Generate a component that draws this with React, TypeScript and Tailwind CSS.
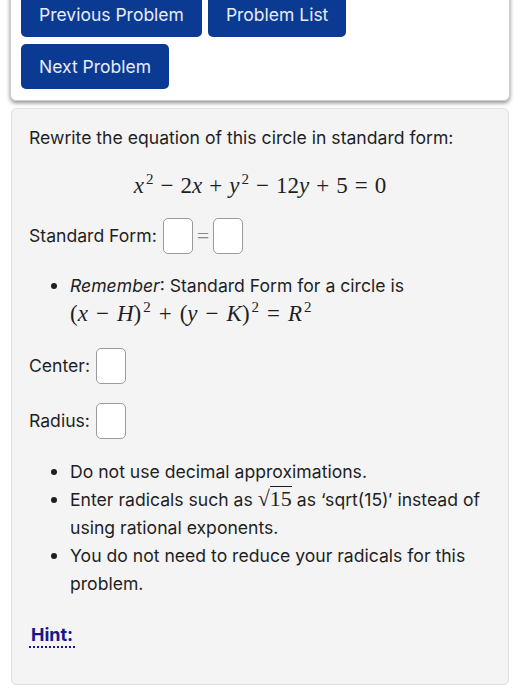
const ui = { fontFamily: 'Inter, "Noto Sans", sans-serif' }
const mathFont = { fontFamily: '"Liberation Serif", "DejaVu Serif", serif' }

function Btn({ children }: { children: React.ReactNode }) {
  return (
    <button className="h-[45px] px-[18px] rounded-[5px] bg-[#0a3a92] text-[#e8ecf6] text-[17.5px] leading-none">
      {children}
    </button>
  )
}

function Box() {
  return <span className="inline-block w-[30px] h-[36px] rounded-[5px] border border-[#9a9a9a] bg-white align-middle" />
}

function V({ children }: { children: React.ReactNode }) {
  return <i className="italic">{children}</i>
}

function Sup({ children }: { children: React.ReactNode }) {
  return <span className="inline-block text-[15px] relative -top-[9px] not-italic ml-[2px] leading-none">{children}</span>
}

function Op({ children, tight }: { children: React.ReactNode; tight?: boolean }) {
  return <span className={tight ? 'mx-[7px]' : 'mx-[8px]'}>{children}</span>
}

function Item({ children }: { children: React.ReactNode }) {
  return (
    <li className="flex">
      <span className="w-[41px] shrink-0 flex justify-end pr-[13px] pt-[11px]">
        <span className="w-[6px] h-[6px] rounded-full bg-[#1f1f1f]" />
      </span>
      <span>{children}</span>
    </li>
  )
}

export default function App() {
  return (
    <div className="w-[520px] h-[700px] bg-white overflow-hidden text-[#1f1f1f]" style={ui}>
      <div className="mx-[10px] -mt-[8px] bg-white rounded-b-[6px] shadow-[0_2px_4px_rgba(0,0,0,0.45)] border border-t-0 border-[#cfcfcf] px-[10px] pb-[11px] flex flex-col gap-[7px]">
        <div className="flex gap-[6px]">
          <Btn>Previous Problem</Btn>
          <Btn>Problem List</Btn>
        </div>
        <div className="flex">
          <Btn>Next Problem</Btn>
        </div>
      </div>

      <div className="mx-[11px] mt-[7px] h-[577px] bg-[#f4f4f5] border border-[#e0e0e0] rounded-[5px] px-[17px] pt-[15px] text-[17.6px] leading-[28px]">
        <p>Rewrite the equation of this circle in standard form:</p>

        <div className="mt-[20px] h-[28px] text-center text-[23px] leading-[28px]" style={mathFont}>
          <V>x</V><Sup>2</Sup><Op tight>−</Op>2<V>x</V><Op tight>+</Op><V>y</V><Sup>2</Sup><Op tight>−</Op>12<V>y</V><Op tight>+</Op>5<Op tight>=</Op>0
        </div>

        <div className="mt-[18px] flex items-center h-[36px]">
          <span>Standard Form:</span>
          <span className="ml-[6px]"><Box /></span>
          <span className="mx-[4px] text-[22px] text-[#888]" style={mathFont}>=</span>
          <Box />
        </div>

        <ul className="mt-[18px]">
          <Item>
            <em>Remember</em>: Standard Form for a circle is
            <br />
            <span className="text-[23px]" style={mathFont}>
              (<V>x</V><Op>−</Op><V>H</V>)<Sup>2</Sup><Op>+</Op>(<V>y</V><Op>−</Op><V>K</V>)<Sup>2</Sup><Op>=</Op><V>R</V><Sup>2</Sup>
            </span>
          </Item>
        </ul>

        <div className="mt-[19px] flex items-center h-[36px]">
          <span>Center:</span>
          <span className="ml-[6px]"><Box /></span>
        </div>

        <div className="mt-[19px] flex items-center h-[36px]">
          <span>Radius:</span>
          <span className="ml-[6px]"><Box /></span>
        </div>

        <ul className="mt-[19px]">
          <Item>Do not use decimal approximations.</Item>
          <Item>
            Enter radicals such as{' '}
            <span className="inline-flex items-end text-[22px] leading-[24px]" style={mathFont}>
              <span>√</span>
              <span className="border-t border-[#1f1f1f]">15</span>
            </span>{' '}
            as ‘sqrt(15)′ instead of using rational exponents.
          </Item>
          <Item>You do not need to reduce your radicals for this problem.</Item>
        </ul>

        <div className="mt-[23px]">
          <span className="font-bold text-[#16168c] border-b-2 border-dotted border-[#16168c] pb-[1px] px-[2px] text-[18px]">Hint:</span>
        </div>
      </div>
    </div>
  )
}
